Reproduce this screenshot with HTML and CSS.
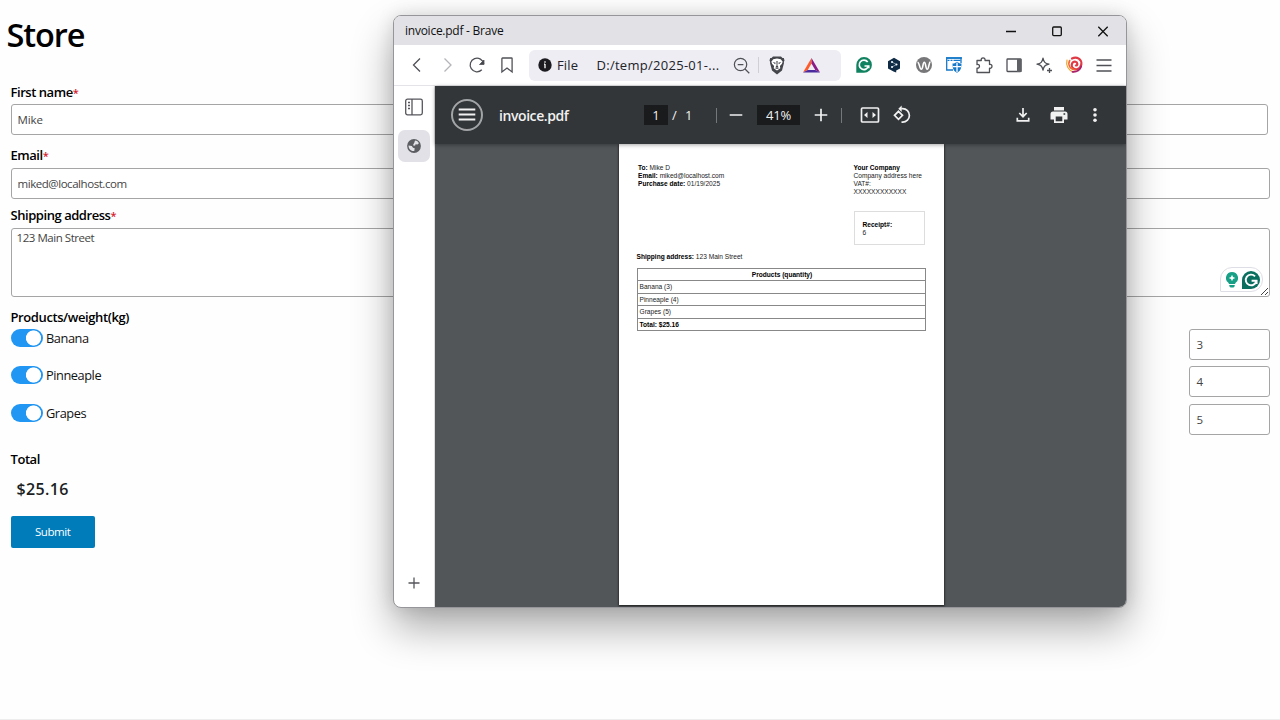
FILE: index.html
```html
<!DOCTYPE html>
<html lang="en">
<head>
<meta charset="utf-8">
<title>Store</title>
<link rel="stylesheet" href="styles.css">
</head>
<body>
<main class="store">
  <h1 class="store-title">Store</h1>
  <form class="form">
    <div class="field field-name"><div class="label">First name<b>*</b></div><div class="input">Mike</div></div>
    <div class="field field-email"><div class="label">Email<b>*</b></div><div class="input">miked@localhost.com</div></div>
    <div class="field field-address"><div class="label">Shipping address<b>*</b></div>
      <div class="textarea">123 Main Street
        <div class="grammar">
          <svg width="12" height="16" viewBox="0 0 12 16"><path fill="#17a085" d="M6 0a6 6 0 0 1 3.600 10.800L9 12H3l-.6-1.200A6 6 0 0 1 6 0zM3.300 13h5.400v1.200L7.500 15.500h-3L3.300 14.200z"/><path fill="#fff" d="M6 2.700 7 5l2.300 1L7 7 6 9.300 5 7 2.700 6 5 5z"/></svg>
          <svg width="18" height="18" viewBox="0 0 18 18"><path fill="#0b6f60" d="M9 0a9 9 0 1 1 0 18H0V9a9 9 0 0 1 9-9z"/><path fill="none" stroke="#fff" stroke-width="1.900" d="M13 5.400a5.300 5.300 0 1 0 1.300 4.400H9.600M14.600 9v4"/></svg>
        </div>
        <svg class="grip" width="9" height="9" viewBox="0 0 9 9"><path stroke="#444" fill="none" d="M1 8 8 1M5 8l3-3"/></svg>
      </div>
    </div>
    <div class="label products-label">Products/weight(kg)</div>
    <div class="products">
      <div class="product"><span class="toggle"></span><span class="product-name">Banana</span><div class="input qty">3</div></div>
      <div class="product"><span class="toggle"></span><span class="product-name">Pinneaple</span><div class="input qty">4</div></div>
      <div class="product"><span class="toggle"></span><span class="product-name">Grapes</span><div class="input qty">5</div></div>
    </div>
    <div class="label total-label">Total</div>
    <div class="total">$25.16</div>
    <div class="submit">Submit</div>
  </form>
</main>

<section class="window">
  <header class="titlebar">
    <span class="window-title">invoice.pdf - Brave</span>
    <div class="controls">
      <svg viewBox="0 0 12 12"><path d="M1 6.500h10"/></svg>
      <svg viewBox="0 0 12 12"><rect x="1.700" y="2" width="8.600" height="8.600" rx="1"/></svg>
      <svg viewBox="0 0 12 12"><path d="m1.300 1.800 9.400 9.400M10.700 1.800l-9.400 9.400"/></svg>
    </div>
  </header>
  <nav class="toolbar">
    <div class="group nav">
      <svg class="ic" viewBox="0 0 20 20"><path d="m13 3.500-6.500 6.500 6.500 6.500"/></svg>
      <svg class="ic dim" viewBox="0 0 20 20"><path d="m7.500 3.500 6.500 6.500-6.500 6.500"/></svg>
      <svg class="ic" viewBox="0 0 20 20"><path d="M14.800 14.800A6.800 6.800 0 1 1 16.700 9"/><path d="M17 5v4.500h-4.500z" fill="#45464c" stroke-width=".8"/></svg>
      <svg class="ic" viewBox="0 0 20 20"><path d="M5.500 3h9a.6.6 0 0 1 .6.600V17l-5.100-4-5.100 4V3.600a.6.6 0 0 1 .6-.6z"/></svg>
    </div>
    <div class="address">
      <svg class="info" viewBox="0 0 14 14"><circle cx="7" cy="7" r="6.700" fill="#1b1b20"/><path d="M7 6v4.300M7 3.300v1.500M6 6.100h1" stroke="#fff" stroke-width="1.300"/></svg>
      <span class="scheme">File</span>
      <span class="url">D:/temp/2025-01-...</span>
      <svg class="ic mag" viewBox="0 0 20 20"><circle cx="9" cy="9" r="6.500"/><path d="m13.700 13.700 4.500 4.500M6 9h6"/></svg>
      <i class="sep"></i>
      <svg class="shield" viewBox="0 0 16 19"><path fill="#45464c" d="M4 .500h8l1.500 1.600h1.300l.7 2.300-.7 1.600.2 1-2 7.600L8 18.500l-5-3.900L1 7l.2-1L.5 4.400l.7-2.300h1.300z"/><path fill="#fff" d="M4.200 3.200 8 2.600l3.800.6 1.900 2.600-.9 2.200-1.900 1.900.4 2.300L8 14.500l-3.300-2.300.4-2.300L3.200 8l-.9-2.200z"/><path fill="#45464c" d="m3.700 5.900 3 .8-.6 1.500zM12.300 5.900l-3 .8.600 1.500zM7.400 5h1.200l-.2 4.500 1 1L8 11.600l-1.400-1.100 1-1zM5.700 12l2.300-.7 2.300.7L8 13z"/></svg>
      <svg class="bat" viewBox="0 0 20 18"><path fill="#ff5a28" d="M10 1 1 16.500l5-2.700L10 7z"/><path fill="#8b1b86" d="m10 1 9 15.500-5-2.700L10 7z"/><path fill="#4a2a9c" d="M1 16.500h18l-5-2.700H6z"/></svg>
    </div>
    <div class="group ext">
      <svg class="ic f" viewBox="0 0 20 20"><path fill="#11825f" d="M10 2a7.800 7.800 0 1 1 0 15.800H2.300V10A7.800 7.800 0 0 1 10 2z"/><path d="M13.700 7a4.700 4.700 0 1 0 .8 4h-4M14.700 10.300v3" stroke="#fff" stroke-width="1.700"/></svg>
      <svg class="ic f" viewBox="0 0 20 20"><path fill="#0f2b46" d="m10 2.800 6 3.400v7.200l-3.800 2.200v2L9.500 16.500 4 13.400V6.200z"/><path d="m8 7 4.500 2.500L8 12" stroke="#9fb5c8" stroke-width=".8"/><g fill="#fff"><circle cx="8" cy="7" r="1"/><circle cx="12.500" cy="9.500" r="1"/><circle cx="8" cy="12" r="1"/></g></svg>
      <svg class="ic f" viewBox="0 0 20 20"><circle cx="10" cy="10" r="8" fill="#77777a"/><path d="M3.500 7.200c2 0 2 7 3.800 7 1.800 0 1.400-7 3-7s1.200 7 2.900 7c1.800 0 1.500-7 3.300-7.500" stroke="#fff" stroke-width="1.600"/></svg>
      <svg class="ic f" viewBox="0 0 20 20"><path d="M17 8V3H2.700v12H9" stroke="#1678c8" stroke-width="1.300"/><path fill="#1678c8" d="M2 2.300h16v1.500H2zM3.500 4.800h2v1.300h-2zM6.500 4.800h2v1.300h-2zM9.500 4.800h7v1.300h-7zM8.500 8.500c2 0 3.500-1 4.500-1.800 1 .8 2.500 1.800 4.500 1.800 0 5-1 7.500-4.500 9.300-3.500-1.800-4.500-4.300-4.500-9.300z"/><path d="M13 7.500v9.500M8.800 11.600h8.400" stroke="#fff"/></svg>
      <svg class="ic" viewBox="0 0 20 20"><path d="M3 5.500h4.300c-1-3.500 4.500-3.500 3.700 0h4.500v4c3.300-1 3.300 4.500 0 3.700v4.300H3v-4.300c3.300.5 3.300-4.500 0-3.700z" stroke-linejoin="round"/></svg>
      <svg class="ic" viewBox="0 0 20 20"><rect x="3" y="4" width="14" height="12.500" rx=".7"/><path fill="#606167" stroke="none" d="M13 4h4.500v13H13z"/></svg>
      <svg class="ic" viewBox="0 0 20 20"><path d="M9 3.200c.8 4 2 5.200 6 6-4 .8-5.200 2-6 6-.8-4-2-5.200-6-6 4-.8 5.200-2 6-6zM15.500 13v5M13 15.500h5" stroke-linejoin="round"/></svg>
      <svg class="ic f" viewBox="0 0 20 20"><g stroke-linecap="round"><path d="M8 3.500c5-2.500 10 1 9.300 6-.7 4.500-6.500 6.500-9 2.800-1.800-3 .5-6.300 3.300-5.600 2.200.6 2.300 3.600.3 3.800" stroke="#df3a46" stroke-width="2.200"/><path d="M5.700 5.500C3.500 9.500 6 14.500 11 14.700" stroke="#ee6a35" stroke-width="1.600"/><path d="M3 5c-1.500 5.500 1.500 10.500 6.500 12" stroke="#f5a52a" stroke-width="1.200"/><path d="M8.500 16.800c4.500.5 8-2 8.700-5.500" stroke="#a8216f" stroke-width="1.700"/></g></svg>
      <svg class="ic" viewBox="0 0 20 20"><path d="M2.500 5h15M2.500 10.500h15M2.500 16h15" stroke-width="1.500"/></svg>
    </div>
  </nav>
  <div class="content">
    <aside class="side">
      <svg class="panel" viewBox="0 0 20 20"><rect x="1.700" y="2.200" width="16.600" height="15.600" rx="1.800"/><path d="M8 2v16M4 5.500h2M4 8.500h2M4 11.500h2"/></svg>
      <div class="tab"><svg viewBox="0 0 14 14"><circle cx="7" cy="7" r="6.900" fill="#5c5d63"/><path fill="#e1e1e7" d="M8 1.500c1.800 0 3.300 1.200 3.900 2.700L10.500 5.500l-2-.3-.3 1.300-1.700.3-.3-1.300 1-1.500zM1.500 6.500l3.300.5 1.200 1.700 1.700.5-.4 2.800C3.500 12.500 1.500 9.500 1.500 6.500z"/></svg></div>
      <svg class="add" viewBox="0 0 12 12"><path d="M6 .500v11M.5 6h11"/></svg>
    </aside>
    <div class="viewer">
      <div class="pdfbar">
        <div class="menu"><svg viewBox="0 0 18 14"><path d="M.7 1.500h16.600M.7 6.500h16.600M.7 11.500h16.600"/></svg></div>
        <span class="pdf-title">invoice.pdf</span>
        <div class="pages"><span class="box page-box">1</span><span class="slash">/</span><span>1</span></div>
        <i class="vsep"></i>
        <svg class="pm minus" viewBox="0 0 14 14"><path d="M.7 7h12.600"/></svg>
        <span class="box zoom-box">41%</span>
        <svg class="pm plus" viewBox="0 0 14 14"><path d="M.7 7h12.600M7 .700v12.600"/></svg>
        <i class="vsep"></i>
        <svg class="pi fit" viewBox="0 0 20 20"><rect x="1.500" y="3" width="17" height="14" rx="1"/><path fill="#f1f1f1" stroke="none" d="M7.500 7v6L4 10zM12.500 7v6l3.500-3z"/></svg>
        <svg class="pi rot" viewBox="0 0 20 20"><path d="m6.500 6.300 4 4-4 4-4-4zM9.300 3.700h1.400a6.700 6.700 0 0 1 0 13.400H9.500"/><path d="M9.700.500 6.300 3.700l3.400 3.200z" fill="#f1f1f1" stroke="none"/></svg>
        <div class="actions">
          <svg class="pi" viewBox="0 0 20 20"><path d="M10 3v8.500M6.300 8l3.700 3.700L13.700 8M4.300 12.800v3h11.400v-3"/></svg>
          <svg class="pi" viewBox="0 0 20 20"><path fill="#f1f1f1" stroke="none" d="M5 2h10v3.500H5zM4 6.500h12a2.500 2.500 0 0 1 2.500 2.500v5.500H15V18H5v-3.500H1.500V9A2.500 2.500 0 0 1 4 6.500z"/><path fill="#323639" stroke="none" d="M6.700 11.500h6.600v4.800H6.700zM14.500 8.300h1.700v1.500h-1.700z"/></svg>
          <svg class="pi" viewBox="0 0 20 20"><g fill="#f1f1f1" stroke="none"><circle cx="10" cy="4.700" r="1.800"/><circle cx="10" cy="10" r="1.800"/><circle cx="10" cy="15.300" r="1.800"/></g></svg>
        </div>
      </div>
      <div class="canvas">
        <article class="paper">
          <div class="paper-head">
            <div class="to"><p><b>To:</b> Mike D</p><p><b>Email:</b> miked@localhost.com</p><p><b>Purchase date:</b> 01/19/2025</p></div>
            <div class="company"><p><b>Your Company</b></p><p>Company address here</p><p>VAT#:</p><p>XXXXXXXXXXXX</p>
              <div class="receipt"><p><b>Receipt#:</b></p><p>6</p></div></div>
          </div>
          <p class="ship"><b>Shipping address:</b> 123 Main Street</p>
          <div class="table"><div class="row head">Products (quantity)</div><div class="row">Banana (3)</div><div class="row">Pinneaple (4)</div><div class="row">Grapes (5)</div><div class="row strong">Total: $25.16</div></div>
        </article>
      </div>
    </div>
  </div>
</section>
</body>
</html>
```
FILE: styles.css
```css
* { box-sizing: border-box; }
body { margin: 0; width: 1280px; height: 720px; overflow: hidden; position: relative; background: #fff; font-family: "Open Sans", "Noto Sans", sans-serif; color: #111; }
svg { display: block; flex: none; fill: none; }
p { margin: 0; }
.store { height: 720px; padding-left: 10.5px; border-bottom: 1px solid #ededed; background: #fefefe; }
.store-title { margin: 0 0 0 -4px; height: 83px; padding-top: 12px; font-size: 32.5px; line-height: 46px; font-weight: 600; color: #000; letter-spacing: -1.1px; }
.label { height: 20px; line-height: 19px; font-size: 13px; font-weight: 600; color: #000; white-space: nowrap; letter-spacing: -0.45px; }
.label b { color: #d6202c; font-weight: 600; font-size: 11px; }
.products-label { letter-spacing: -0.4px; }
.input { height: 31px; padding-left: 6px; border: 1px solid #a5a5a5; border-radius: 3px; background: #fff; color: #444; font-size: 11.5px; line-height: 30px; letter-spacing: -0.45px; }
.field { width: 1259px; }
.field-name { width: 1257px; padding-bottom: 11px; }
.field-name .input { margin-top: 1px; letter-spacing: -0.1px; }
.field-email .input { margin-top: 2px; }
.field-email { padding-bottom: 7px; }
.textarea { position: relative; height: 69px; margin-top: 2px; padding: 0 0 0 5px; border: 1px solid #a5a5a5; border-radius: 3px; background: #fff; color: #444; font-size: 11.5px; line-height: 18px; letter-spacing: -0.45px; }
.grammar { position: absolute; right: 6px; bottom: 4px; width: 43px; height: 25px; display: flex; align-items: center; justify-content: space-between; padding: 0 2px 0 5px; border: 1px solid #dedee6; border-radius: 12px 12px 12px 1px; background: #fff; }
.grip { position: absolute; right: 0; bottom: 0; }
.products-label { margin-top: 11px; }
.products { width: 1259px; padding-top: 1px; display: flex; flex-direction: column; gap: 6.3px; }
.product { display: flex; align-items: flex-start; height: 31px; }
.toggle { width: 32px; height: 18px; border-radius: 9px; background: radial-gradient(circle at 22.5px 9px, #fff 7.2px, #2196f3 7.900px); }
.product-name { margin-left: 3.500px; font-size: 12.8px; line-height: 19px; letter-spacing: -0.45px; }
.qty { width: 81px; margin-left: auto; padding-left: 7px; }
.total-label { margin-top: 15px; }
.total { margin: 7px 0 0 6px; font-size: 16px; line-height: 24px; font-weight: 600; color: #1b1f23; letter-spacing: .35px; }
.submit { width: 84.5px; height: 31.5px; margin-top: 15.6px; border-radius: 2px; background: #007cba; color: #fff; font-size: 11.5px; line-height: 31px; text-align: center; letter-spacing: -0.4px; }

.window { position: absolute; left: 393px; top: 15px; width: 734px; height: 593px; display: flex; flex-direction: column; overflow: hidden; border: 1px solid #96969a; border-radius: 8px; background: #fff; box-shadow: 0 20px 42px rgba(0,0,0,.33), 0 0 18px rgba(0,0,0,.12); }
.titlebar { flex: none; height: 29px; display: flex; justify-content: space-between; align-items: center; padding-left: 11px; background: #e1e1e6; }
.window-title { font-size: 12px; letter-spacing: -0.25px; }
.controls { display: flex; gap: 34px; padding-right: 17px; }
.controls svg { width: 12px; height: 12px; stroke: #111; stroke-width: 1.300; }
.toolbar { flex: none; height: 41px; display: flex; align-items: center; border-bottom: 1px solid #e4e4e8; }
.group { display: flex; gap: 10px; }
.nav { padding-left: 12.5px; }
.ic { width: 20px; height: 20px; stroke: #505157; stroke-width: 1.300; }
.f { stroke: none; }
.nav .dim { stroke: #b4b4ba; }
.address { width: 312px; height: 31px; margin-left: 12.5px; display: flex; align-items: center; padding-left: 9px; border-radius: 6px; background: #ededf3; font-size: 13px; color: #222228; white-space: nowrap; }
.info { width: 14px; height: 14px; }
.scheme { width: 39px; padding-left: 5px; letter-spacing: .15px; }
.url { width: 142px; padding-left: 5.500px; letter-spacing: .28px; }
.mag { width: 19px; height: 19px; margin-left: -1px; }
.sep { width: 1px; height: 16px; background: #cfcfd6; margin: 0 10px 0 7px; }
.shield { width: 16px; height: 19px; }
.bat { width: 19px; height: 17px; margin-left: 17px; }
.ext { margin-left: 13px; }
.content { flex: 1; display: flex; min-height: 0; }
.side { width: 41px; display: flex; flex-direction: column; align-items: center; padding: 11px 0 18px; border-right: 1px solid #ddd; }
.panel { width: 20px; height: 20px; stroke: #55565c; stroke-width: 1.300; }
.tab { width: 32px; height: 32px; margin-top: 13px; display: flex; align-items: center; justify-content: center; border-radius: 7px; background: #e1e1e7; }
.tab svg { width: 14px; height: 14px; }
.add { width: 12px; height: 12px; margin-top: auto; stroke: #55565c; stroke-width: 1.300; }
.viewer { flex: 1; display: flex; flex-direction: column; background: #525659; }
.pdfbar { position: relative; flex: none; height: 58px; display: flex; align-items: center; padding-left: 16px; background: #323639; color: #f1f1f1; font-size: 13px; box-shadow: 0 1px 4px rgba(0,0,0,.35); }
.menu { width: 32px; height: 32px; border: 2px solid #a2a4a6; border-radius: 50%; display: flex; align-items: center; justify-content: center; }
.menu svg { width: 18px; height: 14px; stroke: #f1f1f1; stroke-width: 1.900; }
.pdf-title { width: 161px; padding-left: 16px; font-size: 14px; font-weight: 600; letter-spacing: -0.42px; }
.pages { width: 72px; display: flex; align-items: center; }
.box { height: 20px; line-height: 21px; text-align: center; background: #191b1c; }
.page-box { width: 24px; }
.slash { width: 17px; padding-left: 4px; }
.vsep { width: 1px; height: 15px; background: #75787b; }
.pm { width: 14px; height: 14px; stroke: #f1f1f1; stroke-width: 1.700; }
.minus { margin: 0 14px 0 12px; }
.zoom-box { width: 43px; letter-spacing: -0.2px; }
.plus { margin: 0 13px 0 14px; }
.pi { width: 20px; height: 20px; stroke: #f1f1f1; stroke-width: 1.700; }
.fit { margin-left: 18px; }
.rot { margin-left: 12px; }
.actions { margin-left: auto; display: flex; gap: 16px; padding-right: 21.5px; }
.canvas { flex: 1; padding-left: 183.5px; }
.paper { width: 325px; height: 460.5px; padding: 20px 18px 0; background: #fff; box-shadow: 0 1px 2px #222, 0 0 2px #222; font-family: "Liberation Sans", Arial, sans-serif; font-size: 6.600px; line-height: 8px; color: #222; }
.paper b { color: #000; }
.paper-head { display: flex; justify-content: space-between; height: 89px; padding: 0 1px 0 1.500px; }
.company { width: 71px; white-space: nowrap; }
.receipt { height: 34px; margin-top: 15px; padding: 8.500px 8px; border: 1px solid #ddd; }
.table { margin-top: 6.500px; border: 1px solid #888; border-bottom: 0; }
.row { height: 12.500px; border-bottom: 1px solid #888; padding-left: 2px; line-height: 12px; }
.head { text-align: center; font-weight: 700; color: #000; }
.strong { font-weight: 700; color: #000; }
```
